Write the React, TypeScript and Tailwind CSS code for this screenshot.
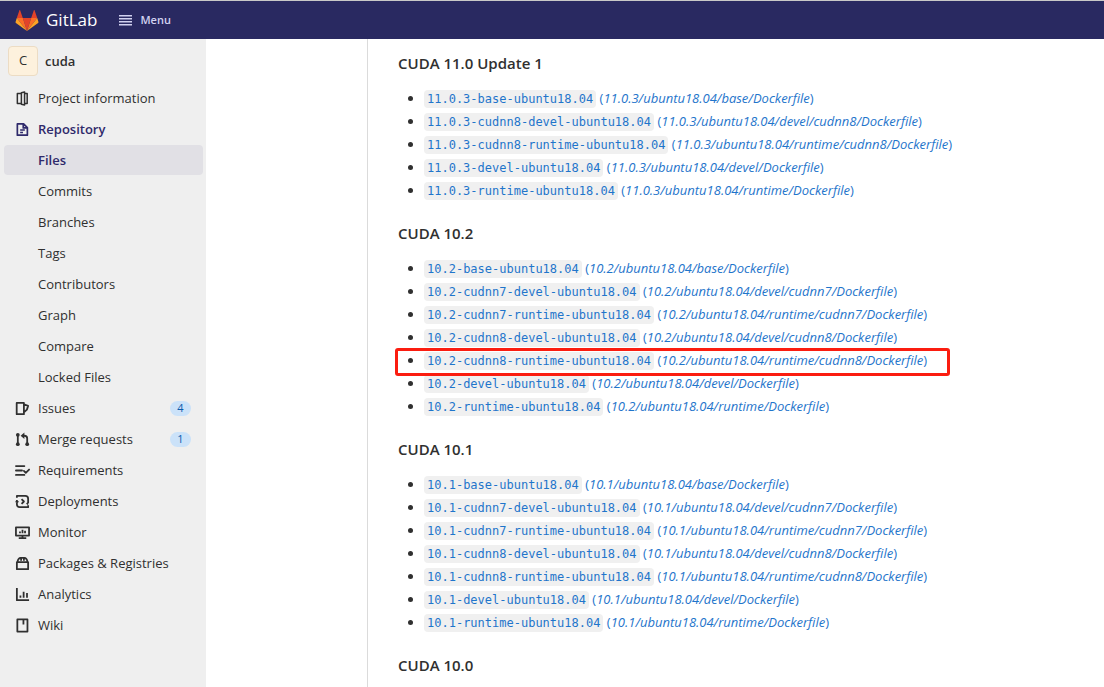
import React, { type ReactNode } from "react";

type Item = { label: string; icon: ReactNode; count?: number; children?: string[] };

const Icon = ({ children }: { children: ReactNode }) => (
  <svg viewBox="0 0 16 16" className="size-[15px] shrink-0" fill="none" stroke="currentColor" strokeWidth="1.9" strokeLinejoin="round" aria-hidden="true">
    {children}
  </svg>
);

const items: Item[] = [
  {
    label: "Project information",
    icon: <Icon><path d="M6.500 2.700H2.500v10.600h4M6.800 1.900l3.400-.9v14l-3.400-.9zM10.500 2.700H13v10.600h-2.500" strokeWidth="1.6" /></Icon>,
  },
  {
    label: "Repository",
    icon: <Icon><path d="M2.500 2h6.700l4 4v8H2.500zM8.800 2v4.300h4.400M5.500 8.500h5M5.500 11.200h3" strokeWidth="1.8" /></Icon>,
    children: ["Files", "Commits", "Branches", "Tags", "Contributors", "Graph", "Compare", "Locked Files"],
  },
  { label: "Issues", count: 4, icon: <Icon><path d="M1.800 2h7.700v12H1.800zM9.500 3.500l4.500 1.700-1.300 4-3.200 3" /></Icon> },
  {
    label: "Merge requests",
    count: 1,
    icon: (
      <Icon>
        <path d="M3 3v10M8 4h2q3 0 3 3v6" />
        <path d="M10 .5v7L6 4z" fill="currentColor" stroke="none" />
        <g fill="currentColor" stroke="none"><circle cx="3" cy="3" r="2" /><circle cx="3" cy="13" r="2" /><circle cx="13" cy="13" r="2" /></g>
      </Icon>
    ),
  },
  { label: "Requirements", icon: <Icon><path d="M1 3.300h9M1 8h6.500M1 12.700h9M9.500 8.500l2 2L15 7" strokeLinecap="round" /></Icon> },
  { label: "Deployments", icon: <Icon><path d="M2 4V2h9q3 0 3 3v4.500M14 12v2H5q-3 0-3-3V6.500M1 9l1-1.500L3.500 9M12.500 9.500L14 11M7 5.500L9.500 8 7 10.500" /></Icon> },
  { label: "Monitor", icon: <Icon><path d="M1 2.500h14v8.800H1zM8 11v3M4 14h8M5.300 7v1.800M8 5v3.800M10.700 6v2.800" /></Icon> },
  { label: "Packages & Registries", icon: <Icon><path d="M2 6.500h12v7.500H2zM2.500 6.500Q3.500 2 6 2h4q2.500 0 3.500 4.500M6.500 2v3M9.500 2v3" /></Icon> },
  { label: "Analytics", icon: <Icon><path d="M2 1v13h13M5.800 9v2.500M9.200 5v6.500M12.800 6.500v5" /></Icon> },
  { label: "Wiki", icon: <Icon><path d="M2.500 1.500h10.800v13H2.500zM9 2v5" /></Icon> },
];

const sections = [
  {
    title: "CUDA 11.0 Update 1",
    version: "11.0.3",
    builds: ["base", "cudnn8-devel", "cudnn8-runtime", "devel", "runtime"],
  },
  {
    title: "CUDA 10.2",
    version: "10.2",
    builds: ["base", "cudnn7-devel", "cudnn7-runtime", "cudnn8-devel", "cudnn8-runtime", "devel", "runtime"],
    marked: "cudnn8-runtime",
  },
  {
    title: "CUDA 10.1",
    version: "10.1",
    builds: ["base", "cudnn7-devel", "cudnn7-runtime", "cudnn8-devel", "cudnn8-runtime", "devel", "runtime"],
  },
  { title: "CUDA 10.0", version: "10.0", builds: [] },
];

const folder = (build: string) => build.split("-").reverse().join("/");

const rowClass = "mb-px flex h-[30px] items-center rounded";

function Header() {
  return (
    <header className="flex h-[39px] shrink-0 items-center border-t border-[#c8c8c8] bg-[#292961] pl-[15px] text-[#d1d1f0]">
      <a href="#home" className="flex items-center gap-[7px] text-white">
        <svg viewBox="0 0 24 22" className="h-[21px] w-6" aria-hidden="true">
          <path d="M12 22L16.400 8.400H7.600z" fill="#e24329" />
          <path d="M12 22L7.600 8.400H1.300zM12 22l4.400-13.600h6.300z" fill="#fc6d26" />
          <path d="M1.300 8.400L0 12.500c-.1.400 0 .8.400 1L12 22zM22.700 8.400l1.300 4.100c.1.400 0 .8-.4 1L12 22z" fill="#fca326" />
          <path d="M1.300 8.400h6.300L4.900.400c-.1-.5-.800-.5-.9 0zM22.700 8.400h-6.300L19.100.400c.1-.5.800-.5.900 0z" fill="#e24329" />
        </svg>
        <span className="text-[17px] font-medium">GitLab</span>
      </a>
      <button type="button" className="ml-[22px] flex items-center gap-2 text-[11px] font-semibold">
        <svg viewBox="0 0 13 12" className="h-3 w-[13px]" fill="currentColor" aria-hidden="true">
          <path d="M0 1h13v1.500H0zM0 4h13v1.500H0zM0 7h13v1.500H0zM0 10h13v1.500H0z" />
        </svg>
        Menu
      </button>
    </header>
  );
}

function Sidebar() {
  return (
    <nav aria-label="Project" className="w-[206px] shrink-0 bg-[#efefef] px-1 pt-[7px] text-[13px] text-[#303030]">
      <a href="#cuda" className="mb-[7px] flex h-[30px] items-center gap-[7px] pl-1">
        <span className="flex size-[30px] items-center justify-center rounded border border-[#ecdcc4] bg-[#fdf1dd]">C</span>
        <span className="pt-[2px] font-semibold">cuda</span>
      </a>
      <ul>
        {items.map((item) => (
          <li key={item.label}>
            <a
              href={"#" + item.label}
              className={rowClass + " gap-2 pr-[11px] pl-[11px]" + (item.children ? " font-semibold text-[#2f2a6b]" : "")}
            >
              {item.icon}
              <span className="grow pt-[2px]">{item.label}</span>
              {item.count && (
                <span className="flex h-[15px] w-[21px] items-center justify-center rounded-full bg-[#cbe2f9] text-[11px] text-[#0b5cad]">{item.count}</span>
              )}
            </a>
            {item.children && (
              <ul>
                {item.children.map((child, i) => (
                  <li key={child}>
                    <a
                      href={"#" + child}
                      className={rowClass + " mr-[-1px] pt-[2px] pl-[34px]" + (i === 0 ? " bg-[#e1e0e5] font-semibold text-[#2f2a6b]" : "")}
                    >
                      {child}
                    </a>
                  </li>
                ))}
              </ul>
            )}
          </li>
        ))}
      </ul>
    </nav>
  );
}

export default function App() {
  return (
    <div className="flex h-screen flex-col overflow-hidden bg-white font-['Open_Sans','Noto_Sans',sans-serif]">
      <Header />
      <div className="flex min-h-0 grow">
        <Sidebar />
        <main className="ml-[161px] grow border-l border-[#dbdbdb] pt-[13px] pl-[30px] text-[#303030]">
          {sections.map((section) => (
            <section key={section.title} className="mb-5">
              <h3 className="mb-3 text-[15px] leading-[23px] font-semibold">{section.title}</h3>
              <ul className="list-disc pl-[26px] text-[13px]">
                {section.builds.map((build) => (
                  <li key={build} className="relative h-[23px] leading-[23px] whitespace-nowrap">
                    <a href={"#" + section.version + "-" + build} className="text-[#1f75cb]">
                      <code className="rounded bg-[#f0f0f0] px-[3px] py-[2px] font-['DejaVu_Sans_Mono',monospace] text-[12px]">
                        {section.version}-{build}-ubuntu18.04
                      </code>{" "}
                      (<em>{section.version}/ubuntu18.04/{folder(build)}/Dockerfile</em>)
                    </a>
                    {section.marked === build && (
                      <span className="pointer-events-none absolute -top-px -bottom-1 -left-[29px] z-10 w-[555px] rounded-[3px] border-3 border-[#fb1d10]" />
                    )}
                  </li>
                ))}
              </ul>
            </section>
          ))}
        </main>
      </div>
    </div>
  );
}
